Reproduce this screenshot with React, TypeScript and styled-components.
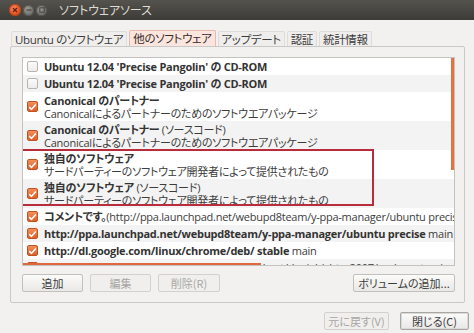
import React from "react";
import styled, { createGlobalStyle, css } from "styled-components";

const Global = createGlobalStyle`
  html, body { margin: 0; padding: 0; }
  body {
    width: 474px;
    height: 333px;
    overflow: hidden;
    background: #f2f1f0;
    font-family: "Open Sans", "Noto Sans CJK JP", sans-serif;
    font-feature-settings: "palt";
    color: #3c3c3c;
  }
`;

const Window = styled.div`
  width: 474px;
  height: 333px;
  display: flex;
  flex-direction: column;
  background: #f2f1f0;
`;

const TitleBar = styled.div`
  height: 20px;
  flex: none;
  display: flex;
  align-items: center;
  padding-left: 9px;
  background: linear-gradient(#55534e, #3c3b37);
  box-sizing: border-box;
`;

const WinButtons = styled.div`
  display: flex;
  align-items: center;
  gap: 2px;
`;

const WinBtn = styled.div<{ $kind: "close" | "min" | "max" }>`
  width: 11px;
  height: 11px;
  border-radius: 50%;
  display: flex;
  align-items: center;
  justify-content: center;
  ${(p) =>
    p.$kind === "close"
      ? css`
          width: 12px;
          height: 12px;
          background: radial-gradient(circle at 40% 35%, #f9875a, #df4a1a 70%);
          box-shadow: inset 0 0 0 1px #b3401a;
        `
      : css`
          background: radial-gradient(circle at 40% 35%, #9a9893, #6c6b67 75%);
          box-shadow: inset 0 0 0 1px #55534f;
        `}
`;

const Title = styled.div`
  margin-left: 12px;
  color: #dfdbd2;
  font-size: 12px;
  line-height: 20px;
  font-family: "Noto Sans CJK JP", sans-serif;
`;

const Body = styled.div`
  flex: 1;
  display: flex;
  flex-direction: column;
  padding-top: 10px;
`;

const TabRow = styled.div`
  display: flex;
  align-items: flex-end;
  height: 16px;
  margin-left: 11px;
  gap: 2px;
`;

const Tab = styled.div<{ $active?: boolean }>`
  height: 15px;
  padding: 0 3px;
  font-size: 11.5px;
  letter-spacing: -0.35px;
  line-height: 15px;
  color: #3c3c3c;
  box-sizing: border-box;
  white-space: nowrap;
  border: 1px solid #dedcd8;
  border-bottom: none;
  border-radius: 2px 2px 0 0;
  background: #efeeec;
  ${(p) =>
    p.$active &&
    css`
      height: 16px;
      background: #fbe6df;
      border-color: #e9b9ab;
      color: #3a2a26;
    `}
`;

const Frame = styled.div`
  margin: 0 9px 0 10px;
  border: 1px solid #cac8c4;
  border-radius: 2px;
  background: #f2f1f0;
  padding: 10px 9px 10px 11px;
  display: flex;
  flex-direction: column;
`;

const List = styled.div`
  position: relative;
  height: 207px;
  border: 1px solid #c4c2be;
  background: #ffffff;
  overflow: hidden;
`;

const Row = styled.div<{ $alt?: boolean; $double?: boolean }>`
  display: flex;
  align-items: center;
  height: ${(p) => (p.$double ? 29 : 17)}px;
  background: ${(p) => (p.$alt ? "#f3f3f3" : "#ffffff")};
  padding-left: 4px;
  box-sizing: border-box;
  white-space: nowrap;
`;

const Check = styled.div<{ $on?: boolean }>`
  flex: none;
  width: 11px;
  height: 11px;
  border-radius: 2px;
  box-sizing: border-box;
  margin-right: 6px;
  display: flex;
  align-items: center;
  justify-content: center;
  ${(p) =>
    p.$on
      ? css`
          background: linear-gradient(#f3905c, #df5d26);
          border: 1px solid #c2521f;
        `
      : css`
          background: linear-gradient(#fbfbfb, #ececec);
          border: 1px solid #b7b5b1;
        `}
`;

const Texts = styled.div`
  display: flex;
  flex-direction: column;
  font-size: 11px;
  letter-spacing: -0.25px;
  line-height: 13px;
  color: #3c3c3c;
`;

const Line = styled.div`
  white-space: nowrap;
  height: 13px;
`;

const B = styled.span`
  font-weight: 700;
  color: #333333;
`;

const Highlight = styled.div`
  position: relative;
  &::after {
    content: "";
    position: absolute;
    left: -2px;
    top: -1px;
    width: 353px;
    height: 57px;
    border: 2px solid #b92c3c;
    box-sizing: border-box;
    pointer-events: none;
  }
`;

const VScroll = styled.div`
  position: absolute;
  right: 0;
  top: 0;
  width: 3px;
  height: 112px;
  background: #e4743f;
`;

const HScroll = styled.div`
  position: absolute;
  left: 0;
  bottom: 0;
  width: 238px;
  height: 2px;
  background: #e1673f;
`;

const ButtonRow = styled.div`
  display: flex;
  align-items: center;
  gap: 7px;
  margin-top: 8px;
`;

const Spacer = styled.div`
  flex: 1;
`;

const Button = styled.button<{ $w: number; $disabled?: boolean; $default?: boolean }>`
  width: ${(p) => p.$w}px;
  height: 18px;
  padding: 0;
  margin: 0;
  font-family: "Noto Sans CJK JP", "Open Sans", sans-serif;
  font-feature-settings: "palt";
  font-size: 11px;
  line-height: 16px;
  border-radius: 2px;
  border: 1px solid ${(p) => (p.$default ? "#a9a7a3" : "#c2c0bc")};
  background: linear-gradient(#fbfbfa, #e9e8e6);
  color: ${(p) => (p.$disabled ? "#a8a6a2" : "#3c3c3c")};
  box-shadow: ${(p) => (p.$default ? "inset 0 0 0 1px #dcdad6" : "none")};
  ${(p) =>
    p.$disabled &&
    css`
      background: #f0efee;
      border-color: #d3d1cd;
    `}
`;

const Footer = styled.div`
  display: flex;
  justify-content: flex-end;
  gap: 11px;
  margin-top: 9px;
  padding-right: 5px;
`;

const CheckMark = () => (
  <svg width="9" height="8" viewBox="0 0 9 8">
    <path d="M1.2 4.2 L3.5 6.4 L7.8 1.4" fill="none" stroke="#ffffff" strokeWidth="1.6" />
  </svg>
);

type Item = {
  on: boolean;
  lines: React.ReactNode[];
};

const items: Item[] = [
  { on: false, lines: [<B>Ubuntu 12.04 'Precise Pangolin' の CD-ROM</B>] },
  { on: false, lines: [<B>Ubuntu 12.04 'Precise Pangolin' の CD-ROM</B>] },
  {
    on: true,
    lines: [<B>Canonical のパートナー</B>, <>Canonicalによるパートナーのためのソフトウエアパッケージ</>],
  },
  {
    on: true,
    lines: [
      <>
        <B>Canonical のパートナー</B> (ソースコード)
      </>,
      <>Canonicalによるパートナーのためのソフトウエアパッケージ</>,
    ],
  },
];

const proprietary: Item[] = [
  {
    on: true,
    lines: [<B>独自のソフトウェア</B>, <>サードパーティーのソフトウェア開発者によって提供されたもの</>],
  },
  {
    on: true,
    lines: [
      <>
        <B>独自のソフトウェア</B> (ソースコード)
      </>,
      <>サードパーティーのソフトウェア開発者によって提供されたもの</>,
    ],
  },
];

const ppas: Item[] = [
  {
    on: true,
    lines: [
      <>
        <B>コメントです。</B>(http://ppa.launchpad.net/webupd8team/y-ppa-manager/ubuntu precise main)
      </>,
    ],
  },
  {
    on: true,
    lines: [
      <>
        <B>http://ppa.launchpad.net/webupd8team/y-ppa-manager/ubuntu precise</B> main
      </>,
    ],
  },
  {
    on: true,
    lines: [
      <>
        <B>http://dl.google.com/linux/chrome/deb/ stable</B> main
      </>,
    ],
  },
  {
    on: true,
    lines: [
      <>
        <B>Grub Customizer PPA</B> (http://ppa.launchpad.net/danielrichter2007/grub-customizer/ubuntu precise main)
      </>,
    ],
  },
];

const renderRow = (it: Item, idx: number) => (
  <Row key={idx} $alt={idx % 2 === 1} $double={it.lines.length > 1}>
    <Check $on={it.on}>{it.on && <CheckMark />}</Check>
    <Texts>
      {it.lines.map((l, i) => (
        <Line key={i}>{l}</Line>
      ))}
    </Texts>
  </Row>
);

export default function App() {
  return (
    <>
      <Global />
      <Window>
        <TitleBar>
          <WinButtons>
            <WinBtn $kind="close">
              <svg width="6" height="6" viewBox="0 0 6 6">
                <path d="M1 1 L5 5 M5 1 L1 5" stroke="#5a2110" strokeWidth="1.2" />
              </svg>
            </WinBtn>
            <WinBtn $kind="min">
              <svg width="6" height="6" viewBox="0 0 6 6">
                <path d="M0.5 3 H5.5" stroke="#44433f" strokeWidth="1.2" />
              </svg>
            </WinBtn>
            <WinBtn $kind="max">
              <svg width="6" height="6" viewBox="0 0 6 6">
                <rect x="0.8" y="0.8" width="4.4" height="4.4" fill="none" stroke="#44433f" strokeWidth="1" />
              </svg>
            </WinBtn>
          </WinButtons>
          <Title>ソフトウェアソース</Title>
        </TitleBar>
        <Body>
          <TabRow>
            <Tab>Ubuntu のソフトウェア</Tab>
            <Tab $active>他のソフトウェア</Tab>
            <Tab>アップデート</Tab>
            <Tab>認証</Tab>
            <Tab>統計情報</Tab>
          </TabRow>
          <Frame>
            <List>
              {items.map((it, i) => renderRow(it, i))}
              <Highlight>{proprietary.map((it, i) => renderRow(it, i + 4))}</Highlight>
              {ppas.map((it, i) => renderRow(it, i + 6))}
              <VScroll />
              <HScroll />
            </List>
            <ButtonRow>
              <Button $w={61}>追加</Button>
              <Button $w={61} $disabled>
                編集
              </Button>
              <Button $w={62} $disabled>
                削除(R)
              </Button>
              <Spacer />
              <Button $w={102}>ボリュームの追加...</Button>
            </ButtonRow>
          </Frame>
          <Footer>
            <Button $w={65} $disabled>
              元に戻す(V)
            </Button>
            <Button $w={69} $default>
              閉じる(C)
            </Button>
          </Footer>
        </Body>
      </Window>
    </>
  );
}
